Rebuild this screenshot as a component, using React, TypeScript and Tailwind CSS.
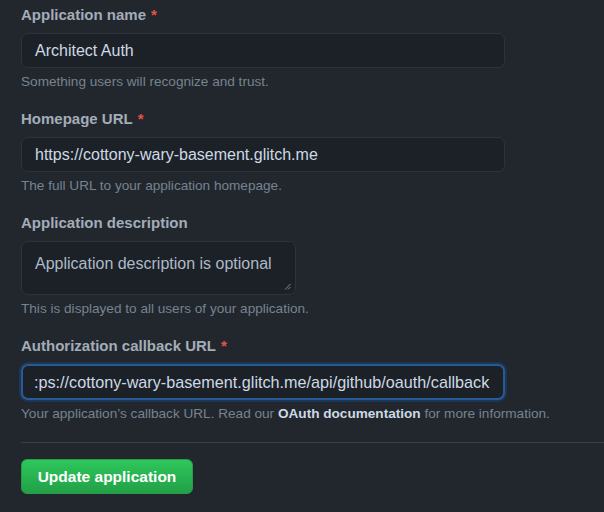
import React from 'react'

const font = { fontFamily: '"Liberation Sans", Arial, sans-serif' }

function Label({ text, required }: { text: string; required?: boolean }) {
  return (
    <div className="text-[15px] leading-[22px] font-bold text-[#a3adb8]">
      {text}
      {required && <span className="ml-[5px] text-[#e5534b]">*</span>}
    </div>
  )
}

function Help({ children }: { children: React.ReactNode }) {
  return <div className="mt-[4px] text-[13.6px] leading-[20px] text-[#768390]">{children}</div>
}

export default function App() {
  return (
    <div style={font} className="w-[604px] h-[512px] overflow-hidden bg-[#22272e] pt-[4px] pl-[21px]">
      {/* Application name */}
      <Label text="Application name" required />
      <div className="mt-[7px] w-[484px] h-[35px] rounded-[7px] border border-[#2d333b] bg-[#1c2128] px-[13px] flex items-center text-[16px] text-[#cdd9e5]">
        Architect Auth
      </div>
      <Help>Something users will recognize and trust.</Help>

      {/* Homepage URL */}
      <div className="mt-[16px]">
        <Label text="Homepage URL" required />
        <div className="mt-[7px] w-[484px] h-[35px] rounded-[7px] border border-[#2d333b] bg-[#1c2128] px-[13px] flex items-center text-[16px] text-[#cdd9e5]">
          https://cottony-wary-basement.glitch.me
        </div>
        <Help>The full URL to your application homepage.</Help>
      </div>

      {/* Description */}
      <div className="mt-[16px]">
        <Label text="Application description" />
        <div className="relative mt-[7px] w-[275px] h-[54px] rounded-[7px] border border-[#2d333b] bg-[#1c2128] px-[13px] pt-[12px] text-[16px] leading-[20px] text-[#adbac7]">
          Application description is optional
          <svg className="absolute right-[4px] bottom-[4px]" width="7" height="7" viewBox="0 0 7 7">
            <path d="M1 6.5 L6.5 1 M4 6.5 L6.5 4" stroke="#8b949e" strokeWidth="0.9" />
          </svg>
        </div>
        <Help>This is displayed to all users of your application.</Help>
      </div>

      {/* Callback URL */}
      <div className="mt-[16px]">
        <Label text="Authorization callback URL" required />
        <div className="mt-[7px] w-[484px] h-[36px] rounded-[7px] border-2 border-[#2a5a94] ring-2 ring-[#1b3656] bg-[#1c2128] pl-[11px] flex items-center overflow-hidden whitespace-nowrap text-[16.2px] text-[#cdd9e5]">
          :ps://cottony-wary-basement.glitch.me/api/github/oauth/callback
        </div>
        <Help>
          Your application’s callback URL. Read our{' '}
          <span className="text-[#cdd9e5] font-bold">OAuth documentation</span> for more information.
        </Help>
      </div>

      <div className="mt-[18px] border-t border-[#373e47]" />

      <button className="mt-[16px] w-[172px] h-[35px] rounded-[6px] border border-[#2a9a49] bg-gradient-to-b from-[#2ec75c] to-[#22a046] text-white text-[15.5px] font-bold">
        Update application
      </button>
    </div>
  )
}
